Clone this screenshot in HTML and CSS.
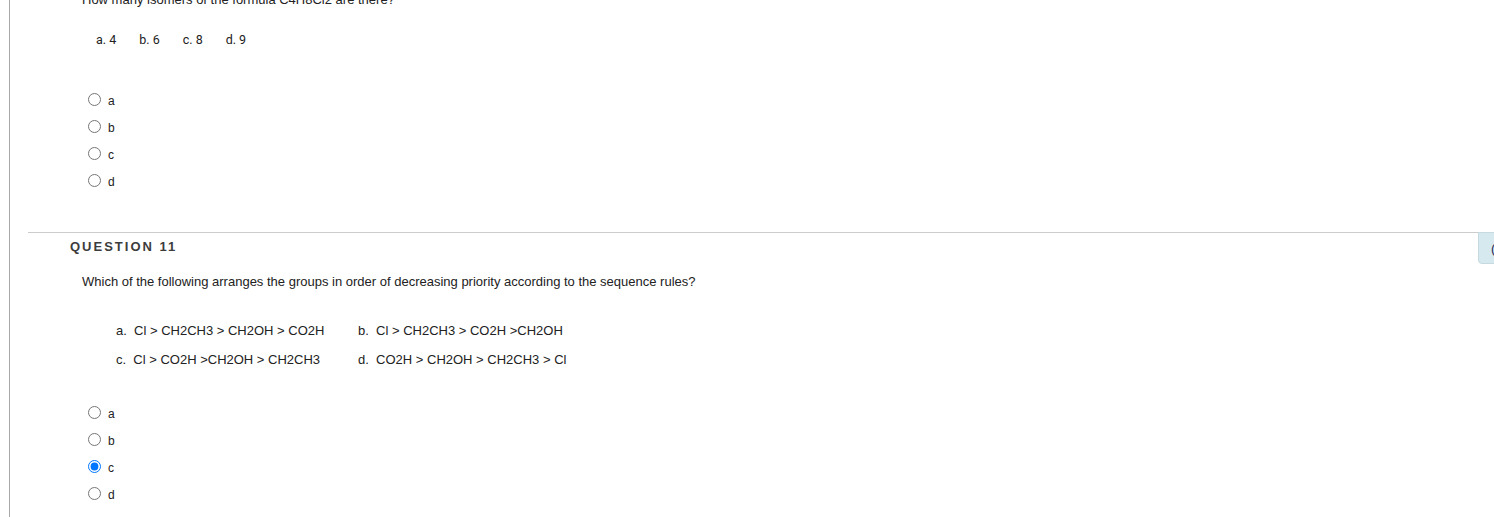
FILE: index.html
```html
<!DOCTYPE html>
<html lang="en">

<head>
    <meta charset="UTF-8">
    <title>Test</title>
    <link rel="stylesheet" href="styles.css">
</head>

<body>
    <div class="page">
        <div class="question prev">
            <p class="question-text">How many isomers of the formula C4H8Cl2 are there?</p>
            <p class="choices-inline">
                <span>a. 4</span>
                <span>b. 6</span>
                <span>c. 8</span>
                <span>d. 9</span>
            </p>
            <div class="answers">
                <label class="answer"><input type="radio" name="q10"><span>a</span></label>
                <label class="answer"><input type="radio" name="q10"><span>b</span></label>
                <label class="answer"><input type="radio" name="q10"><span>c</span></label>
                <label class="answer"><input type="radio" name="q10"><span>d</span></label>
            </div>
        </div>

        <div class="question current">
            <div class="question-head">
                <h3>QUESTION 11</h3>
                <div class="points">(</div>
            </div>
            <p class="question-text">Which of the following arranges the groups in order of decreasing priority according to the sequence rules?</p>
            <table class="choices-table">
                <tr>
                    <td>a.&nbsp; Cl &gt; CH2CH3 &gt; CH2OH &gt; CO2H</td>
                    <td>b.&nbsp; Cl &gt; CH2CH3 &gt; CO2H &gt;CH2OH</td>
                </tr>
                <tr>
                    <td>c.&nbsp; Cl &gt; CO2H &gt;CH2OH &gt; CH2CH3</td>
                    <td>d.&nbsp; CO2H &gt; CH2OH &gt; CH2CH3 &gt; Cl</td>
                </tr>
            </table>
            <div class="answers">
                <label class="answer"><input type="radio" name="q11"><span>a</span></label>
                <label class="answer"><input type="radio" name="q11"><span>b</span></label>
                <label class="answer"><input type="radio" name="q11" checked><span>c</span></label>
                <label class="answer"><input type="radio" name="q11"><span>d</span></label>
            </div>
        </div>
    </div>
</body>

</html>
```

FILE: styles.css
```css
html,
body {
    margin: 0;
    padding: 0;
    background-color: #fff;
    overflow: hidden;
}

body {
    font-family: 'Liberation Sans', Arial, sans-serif;
    font-size: 13px;
    color: #222;
}

.page {
    display: flow-root;
    margin-left: 9px;
    min-height: 100vh;
    border-left: 1px solid #a8a8a8;
}

.question {
    margin-left: 18px;
}

.question-text {
    margin: 0;
    padding-left: 54px;
    line-height: 16px;
}

.prev .question-text {
    margin-top: -8px;
}

.choices-inline {
    margin: 24px 0 0;
    padding-left: 68px;
    line-height: 16px;
    font-family: Roboto, 'Liberation Sans', sans-serif;
    font-size: 12.5px;
    display: flex;
    gap: 23px;
}

.answers {
    display: flex;
    flex-direction: column;
    padding-left: 60px;
}

.prev .answers {
    margin-top: 38px;
    margin-bottom: 38px;
}

.answer {
    display: flex;
    align-items: center;
    height: 27px;
    font-size: 12px;
}

.answer input {
    margin: 0 7px 0 0;
    width: 13px;
    height: 13px;
}

.answer span {
    padding-top: 3px;
}

.question-head {
    display: flex;
    justify-content: space-between;
    align-items: flex-start;
    border-top: 1px solid #cccccc;
    height: 41px;
}

.question-head h3 {
    margin: 6px 0 0 42px;
    font-size: 13px;
    font-weight: bold;
    letter-spacing: 2px;
    color: #3c3c3c;
}

.points {
    margin-top: -1px;
    margin-right: -36px;
    width: 52px;
    height: 32px;
    box-sizing: border-box;
    padding: 8px 0 0 12px;
    background-color: #d5e9ef;
    border: 1px solid #c4d9e0;
    border-radius: 0 0 0 4px;
    color: #1e2a55;
    font-size: 13px;
    white-space: nowrap;
}

.choices-table {
    margin: 26px 0 0 84px;
    border-collapse: collapse;
}

.choices-table td {
    padding: 0 0 0 4px;
    height: 29px;
    line-height: 16px;
    white-space: nowrap;
}

.choices-table td:first-child {
    width: 238px;
}

.current .answers {
    margin-top: 25px;
}
```
